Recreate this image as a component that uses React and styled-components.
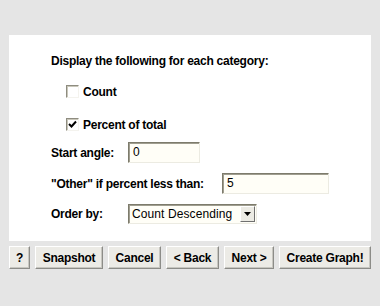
import React from "react"
import styled, { createGlobalStyle } from "styled-components"

const GlobalStyle = createGlobalStyle`
  html, body {
    margin: 0;
    padding: 0;
    background: #e5e5e5;
  }
  body {
    font-family: "Liberation Sans", Arial, sans-serif;
    font-size: 12px;
    color: #000;
  }
`

const Page = styled.div`
  width: 380px;
  height: 306px;
  padding: 35px 9px 0;
  box-sizing: border-box;
`

const Panel = styled.div`
  background: #fff;
  height: 206px;
  box-sizing: border-box;
  padding: 19px 0 0 42px;
  display: flex;
  flex-direction: column;
`

const Heading = styled.div`
  font-weight: bold;
  letter-spacing: -0.25px;
  line-height: 14px;
  height: 14px;
`

const CheckRow = styled.label`
  display: flex;
  align-items: center;
  gap: 4px;
  margin-left: 15px;
  margin-top: ${(p) => p.$top}px;
  height: 13px;
  font-weight: bold;
  letter-spacing: -0.25px;
`

const Box = styled.span`
  width: 13px;
  height: 13px;
  box-sizing: border-box;
  border: 1px solid;
  border-color: #8e8c80 #f4f3ee #f4f3ee #8e8c80;
  box-shadow: inset 1px 1px 0 #c9c7ba;
  background: #fff;
  display: flex;
  align-items: center;
  justify-content: center;
`

const FieldRow = styled.div`
  display: flex;
  align-items: center;
  margin-top: ${(p) => p.$top}px;
`

const Label = styled.span`
  font-weight: bold;
  letter-spacing: -0.25px;
  min-width: ${(p) => p.$w}px;
  white-space: nowrap;
`

const TextInput = styled.div`
  width: ${(p) => p.$w}px;
  height: 21px;
  box-sizing: border-box;
  border: 1px solid;
  border-color: #7d7b6c #ecebe2 #ecebe2 #7d7b6c;
  box-shadow: inset 1px 1px 0 #a09e90;
  background: #fffef7;
  padding: 0 4px;
  line-height: 19px;
  font-size: 12px;
`

const Select = styled.div`
  width: 129px;
  height: 20px;
  box-sizing: border-box;
  border: 1px solid;
  border-color: #7d7b6c #ecebe2 #ecebe2 #7d7b6c;
  box-shadow: inset 1px 1px 0 #a09e90;
  background: #fffef7;
  display: flex;
  align-items: center;
  justify-content: space-between;
  padding: 0 1px 0 3px;
  font-size: 12px;
  letter-spacing: 0.1px;
`

const DropButton = styled.span`
  width: 15px;
  height: 16px;
  box-sizing: border-box;
  border: 1px solid;
  border-color: #fff #707070 #707070 #fff;
  background: #ecebe4;
  display: flex;
  align-items: center;
  justify-content: center;
`

const ButtonBar = styled.div`
  display: flex;
  gap: 5px;
  margin-top: 5px;
`

const Button = styled.button`
  width: ${(p) => p.$w}px;
  flex: none;
  height: 23px;
  box-sizing: border-box;
  padding: 0;
  border: 1px solid;
  border-color: #fff #8c8c88 #8c8c88 #fff;
  box-shadow: inset -1px -1px 0 #c7c6c0;
  background: #ecebe6;
  font-family: "Liberation Sans", Arial, sans-serif;
  font-size: 12px;
  font-weight: bold;
  letter-spacing: -0.25px;
  color: #000;
`

const Check = () => (
  <svg width="9" height="9" viewBox="0 0 9 9">
    <path d="M1 4 L3.5 6.5 L8 1.5" fill="none" stroke="#000" strokeWidth="2" />
  </svg>
)

const Arrow = () => (
  <svg width="7" height="4" viewBox="0 0 7 4">
    <path d="M0 0 H7 L3.5 4 Z" fill="#000" />
  </svg>
)

const buttons = [
  ["?", 21],
  ["Snapshot", 68],
  ["Cancel", 53],
  ["< Back", 53],
  ["Next >", 50],
  ["Create Graph!", 92],
]

export default function App() {
  return (
    <Page>
      <GlobalStyle />
      <Panel>
        <Heading>Display the following for each category:</Heading>
        <CheckRow $top={17}>
          <Box />
          Count
        </CheckRow>
        <CheckRow $top={20}>
          <Box>
            <Check />
          </Box>
          Percent of total
        </CheckRow>
        <FieldRow $top={11}>
          <Label $w={77}>Start angle:</Label>
          <TextInput $w={72}>0</TextInput>
        </FieldRow>
        <FieldRow $top={10}>
          <Label $w={171}>"Other" if percent less than:</Label>
          <TextInput $w={107}>5</TextInput>
        </FieldRow>
        <FieldRow $top={10}>
          <Label $w={77}>Order by:</Label>
          <Select>
            Count Descending
            <DropButton>
              <Arrow />
            </DropButton>
          </Select>
        </FieldRow>
      </Panel>
      <ButtonBar>
        {buttons.map(([text, w]) => (
          <Button key={text} $w={w}>
            {text}
          </Button>
        ))}
      </ButtonBar>
    </Page>
  )
}
